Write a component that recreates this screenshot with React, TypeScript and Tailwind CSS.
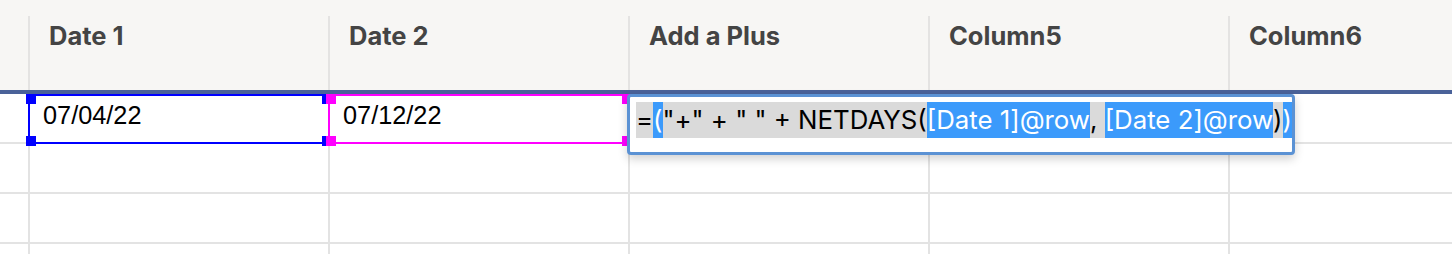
import React from "react";

const cols = ["Date 1", "Date 2", "Add a Plus", "Column5", "Column6"];
const rows: string[][] = [
  ["07/04/22", "07/12/22", "", "", ""],
  ["", "", "", "", ""],
  ["", "", "", "", ""],
  ["", "", "", "", ""],
];

type Seg = { t: string; hl: boolean };
const formula: Seg[] = [
  { t: "=", hl: false },
  { t: "(", hl: true },
  { t: '"+" + " " + NETDAYS(', hl: false },
  { t: "[Date 1]@row", hl: true },
  { t: ", ", hl: false },
  { t: "[Date 2]@row", hl: true },
  { t: ")", hl: false },
  { t: ")", hl: true },
];

function Handles({ color }: { color: string }) {
  return (
    <>
      <div className={`absolute left-[-4px] top-[-2px] w-[10px] h-[10px] ${color}`} />
      <div className={`absolute right-[-4px] top-[-2px] w-[10px] h-[10px] ${color}`} />
      <div className={`absolute left-[-4px] bottom-[-4px] w-[10px] h-[10px] ${color}`} />
      <div className={`absolute right-[-4px] bottom-[-4px] w-[10px] h-[10px] ${color}`} />
    </>
  );
}

export default function App() {
  return (
    <div className="relative w-[1452px] h-[254px] overflow-hidden bg-white">
      {/* Header */}
      <div className="flex h-[94px] bg-[#f7f6f4] border-b-4 border-[#4a6299]">
        <div className="w-[28px] shrink-0" />
        {cols.map((c) => (
          <div key={c} className="w-[300px] shrink-0 pt-4">
            <div
              className="h-[74px] border-l-2 border-[#e4e3e2] pl-[19px] pt-[4px] text-[25.5px] leading-[31px] font-bold text-[#444444]"
              style={{ fontFamily: "Inter, 'Noto Sans', sans-serif" }}
            >
              {c}
            </div>
          </div>
        ))}
      </div>
      {/* Body */}
      {rows.map((r, i) => (
        <div key={i} className="flex h-[50px] border-b-2 border-[#e3e3e3]">
          <div className="w-[28px] shrink-0" />
          {r.map((v, j) => (
            <div
              key={j}
              className="w-[300px] shrink-0 border-l-2 border-[#e3e3e3] pl-[13px] pt-[6px] text-[25.3px] leading-[30px] text-black"
              style={{ fontFamily: "'Liberation Sans', Arial, sans-serif" }}
            >
              {v}
            </div>
          ))}
        </div>
      ))}

      {/* Selection overlays */}
      <div className="absolute left-[28px] top-[94px] w-[302px] h-[50px] border-2 border-[#0000ff]">
        <Handles color="bg-[#0000ff]" />
      </div>
      <div className="absolute left-[328px] top-[94px] w-[302px] h-[50px] border-2 border-[#ff00ff]">
        <Handles color="bg-[#ff00ff]" />
      </div>

      {/* Formula editor */}
      <div className="absolute left-[627px] top-[94px] w-[668px] h-[61px] border-[3px] border-[#5b92d4] rounded-[4px] bg-white shadow-[0_4px_10px_rgba(0,0,0,0.18)] pl-[6px] pt-[5px]">
        <div
          className="flex whitespace-pre text-[25.8px] leading-[36px] h-[36px]"
          style={{ fontFamily: "Inter, 'Noto Sans', sans-serif" }}
        >
          {formula.map((s, i) => (
            <span
              key={i}
              className={s.hl ? "bg-[#3b9afb] text-white" : "bg-[#dadada] text-black"}
            >
              {s.t}
            </span>
          ))}
        </div>
      </div>
    </div>
  );
}
